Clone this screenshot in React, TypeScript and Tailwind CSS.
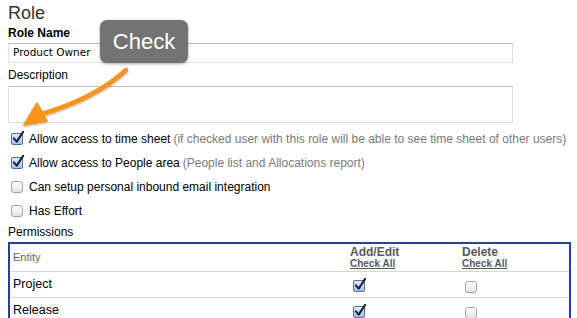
import React from "react";

type BoxProps = { checked?: boolean; className?: string };

const Box: React.FC<BoxProps> = ({ checked, className = "" }) => {
  if (!checked) {
    return (
      <span
        className={`inline-block shrink-0 w-[12px] h-[12px] rounded-[3px] border border-[#a5a5a5] bg-gradient-to-b from-white to-[#e6e6e6] shadow-[0_1px_0_rgba(0,0,0,0.06)] ${className}`}
      />
    );
  }
  return (
    <span className={`relative inline-block shrink-0 w-[12px] h-[12px] ${className}`}>
      <span className="absolute inset-0 rounded-[2px] border border-[#4e72a8] bg-gradient-to-b from-[#e3eefb] to-[#9fc1ec]" />
      <svg viewBox="0 0 14 14" className="absolute left-[1px] top-[-3px] w-[13px] h-[14px]">
        <path d="M2 8.5 L5 12 L12 1.5" fill="none" stroke="#1b1d3a" strokeWidth="2.2" strokeLinecap="round" strokeLinejoin="round" />
      </svg>
    </span>
  );
};

const options = [
  {
    label: "Allow access to time sheet",
    note: "(if checked user with this role will be able to see time sheet of other users)",
    checked: true,
  },
  { label: "Allow access to People area", note: "(People list and Allocations report)", checked: true },
  { label: "Can setup personal inbound email integration", checked: false },
  { label: "Has Effort", checked: false },
];

const rows = [
  { name: "Project", edit: true, del: false },
  { name: "Release", edit: true, del: false },
];

export default function App() {
  return (
    <div className="relative w-[577px] h-[318px] overflow-hidden bg-white px-2 pt-[2px] text-[#222] font-['Liberation_Sans',Arial,sans-serif]">
      <h1 className="text-[18px] leading-[22px] text-[#333]">Role</h1>

      <div className="mt-[2px] text-[12px] leading-[14px] font-bold text-black">Role Name</div>
      <div className="mt-[3px] w-[505px] h-[20px] border border-[#dedede] border-t-[#bdbdbd] px-[4px] flex items-center text-[10.5px] text-black font-['DejaVu_Sans',sans-serif]">
        Product Owner
      </div>

      <div className="mt-[5px] text-[12px] leading-[14px] text-black">Description</div>
      <div className="mt-[4px] w-[505px] h-[37px] border border-[#dedede] border-t-[#bdbdbd]" />

      <div className="mt-[4px]">
        {options.map((o) => (
          <div key={o.label} className="h-6 flex items-center text-[12px] whitespace-nowrap">
            <Box checked={o.checked} className="ml-[3px] mr-[6px]" />
            <span className="text-black">{o.label}</span>
            {o.note && <span className="ml-[3px] text-[#7a7a7a]">{o.note}</span>}
          </div>
        ))}
      </div>

      <div className="mt-[2px] text-[12px] leading-[14px] text-black">Permissions</div>
      <div className="mt-[3px] w-[563px] border-2 border-b-0 border-[#22439a]">
        <div className="h-[28px] flex items-center border-b border-[#d4d4d4]">
          <div className="w-[340px] pl-[3px] text-[11px] text-[#666]">Entity</div>
          <div className="w-[112px] flex flex-col leading-none text-[#5a5a5a]">
            <span className="text-[12px] font-bold">Add/Edit</span>
            <span className="mt-[1px] text-[10px] font-bold underline">Check All</span>
          </div>
          <div className="flex flex-col leading-none text-[#5a5a5a]">
            <span className="text-[12px] font-bold">Delete</span>
            <span className="mt-[1px] text-[10px] font-bold underline">Check All</span>
          </div>
        </div>
        {rows.map((r) => (
          <div key={r.name} className="h-[26px] flex items-center border-b border-[#d4d4d4]">
            <div className="w-[340px] pl-[3px] text-[12.5px] text-black">{r.name}</div>
            <div className="w-[112px] flex pl-[3px] pt-[2px]">
              <Box checked={r.edit} />
            </div>
            <div className="flex pl-[3px] pt-[5px]">
              <Box checked={r.del} />
            </div>
          </div>
        ))}
      </div>

      <svg className="absolute left-0 top-0 pointer-events-none" width="577" height="318" viewBox="0 0 577 318">
        <defs>
          <filter id="sh" x="-20%" y="-20%" width="140%" height="140%">
            <feDropShadow dx="0" dy="1" stdDeviation="0.8" floodColor="#000" floodOpacity="0.35" />
          </filter>
        </defs>
        <g filter="url(#sh)">
          <path d="M126 70 Q 96 98 42 114" fill="none" stroke="#f7941d" strokeWidth="4.5" strokeLinecap="round" />
          <polygon points="24,125 47,121 37,103" fill="#f7941d" stroke="#f7941d" strokeWidth="1.5" strokeLinejoin="round" />
        </g>
      </svg>

      <div className="absolute left-[100px] top-[20px] w-[88px] h-[43px] rounded-[7px] bg-[#6b6b6b]/95 shadow-[0_1px_3px_rgba(0,0,0,0.35)] flex items-center justify-center text-white text-[22px]">
        Check
      </div>
    </div>
  );
}
